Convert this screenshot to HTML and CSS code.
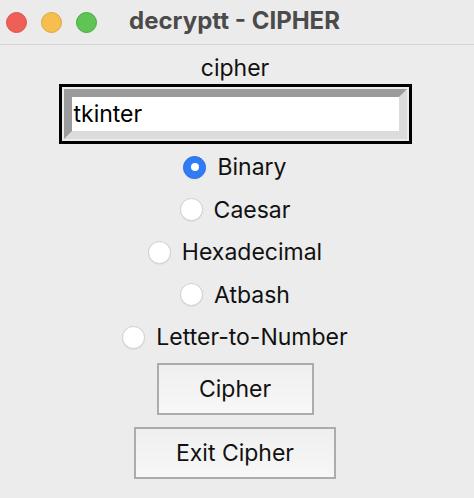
FILE: index.html
```html
<!DOCTYPE html>
<html>
<head>
<meta charset="utf-8">
<title>decryptt - CIPHER</title>
<link rel="stylesheet" href="styles.css">
</head>
<body>
<div class="window">
  <div class="titlebar">
    <div class="lights">
      <span class="light red"></span>
      <span class="light yellow"></span>
      <span class="light green"></span>
    </div>
    <div class="title">decryptt - CIPHER</div>
    <div class="spacer"></div>
  </div>
  <div class="content">
    <div class="label">cipher</div>
    <div class="entry-frame">
      <div class="entry-bevel">
        <div class="entry">tkinter</div>
      </div>
    </div>
    <div class="radios">
      <div class="radio-row"><span class="radio checked"></span><span class="radio-label">Binary</span></div>
      <div class="radio-row"><span class="radio"></span><span class="radio-label">Caesar</span></div>
      <div class="radio-row"><span class="radio"></span><span class="radio-label">Hexadecimal</span></div>
      <div class="radio-row"><span class="radio"></span><span class="radio-label">Atbash</span></div>
      <div class="radio-row"><span class="radio"></span><span class="radio-label">Letter-to-Number</span></div>
    </div>
    <div class="btn btn-cipher">Cipher</div>
    <div class="btn btn-exit">Exit Cipher</div>
  </div>
</div>
</body>
</html>
```

FILE: styles.css
```css
html, body {
  margin: 0;
  padding: 0;
}
body {
  background: #ececec;
  font-family: Inter, "Liberation Sans", Arial, sans-serif;
  color: #111;
}
.window {
  width: 474px;
  height: 498px;
  background: #ececec;
  overflow: hidden;
}
.titlebar {
  height: 44px;
  border-bottom: 1px solid #d4d4d4;
  background: #ebebeb;
  display: grid;
  grid-template-columns: 1fr auto 1fr;
  align-items: center;
}
.lights {
  display: flex;
  gap: 14px;
  padding-left: 6px;
}
.light {
  width: 21px;
  height: 21px;
  border-radius: 50%;
  box-sizing: border-box;
}
.red { background: #ed5f57; border: 1px solid #d9534b; }
.yellow { background: #f6be4f; border: 1px solid #dfa53b; }
.green { background: #5fc453; border: 1px solid #4aa83f; }
.title {
  font-weight: bold;
  font-size: 24px;
  color: #4b4b4b;
  padding-bottom: 3px;
  padding-right: 5px;
}
.content {
  display: flex;
  flex-direction: column;
  align-items: center;
  padding-right: 4px;
}
.label {
  margin-top: 9px;
  font-size: 23px;
  line-height: 28px;
}
.entry-frame {
  margin-top: 2px;
  width: 353px;
  height: 60px;
  box-sizing: border-box;
  border: 3px solid #000;
  padding: 2px;
  background: #ececec;
}
.entry-bevel {
  height: 100%;
  box-sizing: border-box;
  border-style: solid;
  border-width: 8px;
  border-color: #9b9b9b #dcdcdc #dcdcdc #9b9b9b;
  background: #fff;
}
.entry {
  font-size: 23px;
  line-height: 34px;
  padding-left: 2px;
  color: #000;
}
.radios {
  margin-top: 2px;
  display: flex;
  flex-direction: column;
  align-items: center;
}
.radio-row {
  height: 42.5px;
  display: flex;
  align-items: center;
  gap: 11px;
}
.radio {
  width: 23px;
  height: 23px;
  border-radius: 50%;
  box-sizing: border-box;
  background: #fff;
  border: 1px solid #d0d0d0;
  box-shadow: 0 0.5px 1px rgba(0,0,0,0.08);
  position: relative;
}
.radio.checked {
  background: #2f7df6;
  border-color: #2a70dc;
}
.radio.checked::after {
  content: "";
  position: absolute;
  left: 50%;
  top: 50%;
  width: 8px;
  height: 8px;
  margin: -4px 0 0 -4px;
  border-radius: 50%;
  background: #fff;
}
.radio-label {
  font-size: 23px;
  line-height: 28px;
  color: #111;
}
.btn {
  height: 52px;
  box-sizing: border-box;
  border: 2px solid #acacac;
  background: linear-gradient(#efefef, #f7f7f7);
  display: flex;
  align-items: center;
  justify-content: center;
  font-size: 23px;
  color: #111;
}
.btn-cipher {
  margin-top: 4.5px;
  width: 157px;
}
.btn-exit {
  margin-top: 12px;
  width: 202px;
}
```
